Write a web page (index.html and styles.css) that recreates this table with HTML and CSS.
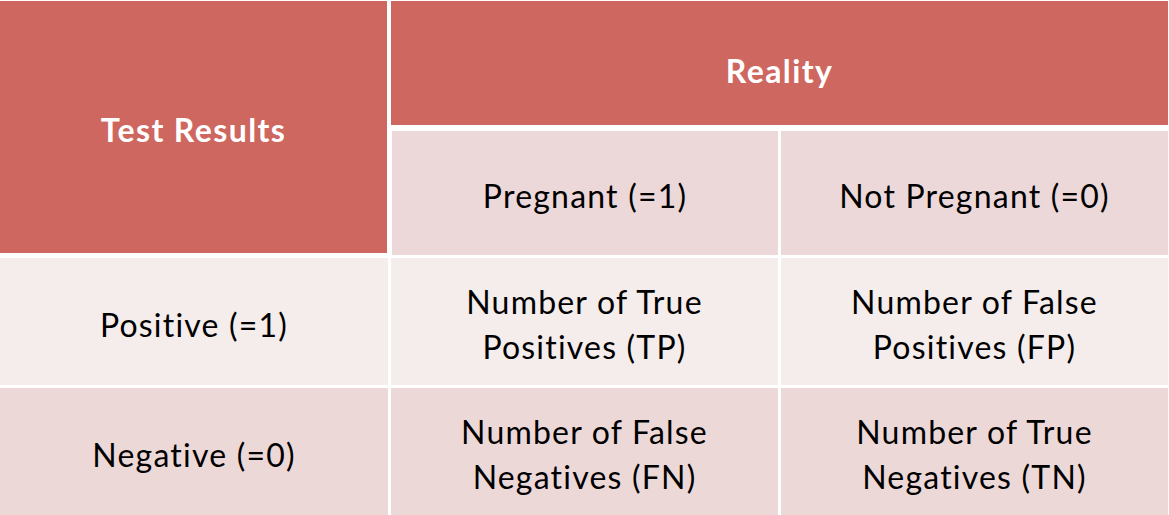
FILE: index.html
```html
<!DOCTYPE html>
<html>
<head>
<meta charset="utf-8">
<link rel="stylesheet" href="styles.css">
</head>
<body>
<div class="matrix">
  <div class="cell head corner">Test Results</div>
  <div class="cell head reality">Reality</div>
  <div class="cell sub first">Pregnant (=1)</div>
  <div class="cell sub">Not Pregnant (=0)</div>
  <div class="cell light">Positive (=1)</div>
  <div class="cell light">Number of True<br>Positives (TP)</div>
  <div class="cell light">Number of False<br>Positives (FP)</div>
  <div class="cell dark">Negative (=0)</div>
  <div class="cell dark">Number of False<br>Negatives (FN)</div>
  <div class="cell dark">Number of True<br>Negatives (TN)</div>
</div>
</body>
</html>
```
FILE: styles.css
```css
html, body {
  margin: 0;
  padding: 0;
  background: #ffffff;
}
.matrix {
  width: 1169px;
  height: 515px;
  box-sizing: border-box;
  padding: 1px 1px 0 0;
  display: grid;
  grid-template-columns: 388px 387px 387px;
  grid-template-rows: 127px 124px 127px 127px;
  column-gap: 3px;
  row-gap: 3px;
  background: #ffffff;
  font-family: "Lato", "Open Sans", sans-serif;
  font-size: 32px;
  letter-spacing: 1.2px;
  color: #000000;
}
.cell {
  display: flex;
  align-items: center;
  justify-content: center;
  text-align: center;
  line-height: 45px;
  box-sizing: border-box;
  padding-top: 5px;
}
.head {
  background: #ce6760;
  color: #ffffff;
  font-weight: bold;
  letter-spacing: 1.4px;
}
.corner {
  grid-row: 1 / 3;
  grid-column: 1;
  margin-bottom: 2px;
  margin-right: 1px;
}
.reality {
  grid-row: 1;
  grid-column: 2 / 4;
  margin-bottom: 3px;
  padding-top: 14px;
}
.sub {
  background: #edd8d9;
}
.sub.first {
  margin-left: 1px;
}
.light {
  background: #f5ecec;
}
.dark {
  background: #edd8d8;
}
```
